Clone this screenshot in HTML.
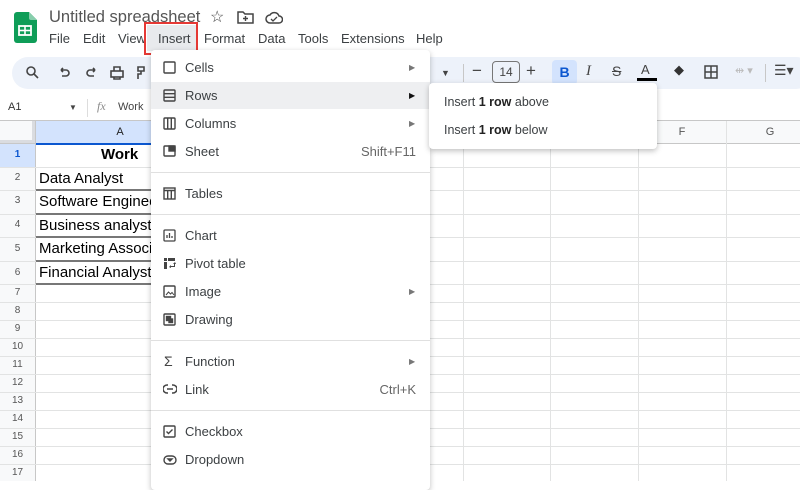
<!DOCTYPE html>
<html><head><meta charset="utf-8"><style>
*{margin:0;padding:0;box-sizing:border-box}
body{width:800px;height:481px;overflow:hidden;background:#fff;font-family:"Liberation Sans",Arial,sans-serif;position:relative;color:#444}
.a{position:absolute}
.t{font-size:13px;color:#3c4043}
.rn{position:absolute;left:0;width:35px;text-align:center;font-size:10px;color:#555}
.hl{position:absolute;left:0;width:800px;height:1px;background:#e2e3e3}
.vl{position:absolute;top:121px;width:1px;height:360px;background:#e2e3e3}
.cell{position:absolute;left:36px;font-size:15px;color:#000;font-family:"Liberation Sans",sans-serif}
.mi{position:absolute;left:185px;font-size:13px;color:#3c4043}
.ic{position:absolute;left:163px}
.ar{position:absolute;left:409px;font-size:8px;color:#777}
.sep{position:absolute;left:151px;width:279px;height:1px;background:#e0e0e0}
</style></head><body>
<svg class="a" style="left:14px;top:12px" width="23" height="31" viewBox="0 0 23 31"><path d="M3 0h12l8 8v20a3 3 0 0 1-3 3H3a3 3 0 0 1-3-3V3a3 3 0 0 1 3-3z" fill="#0f9d58"/><path d="M15 0l8 8h-6a2 2 0 0 1-2-2z" fill="#87ceac"/><rect x="5" y="14" width="12" height="9" fill="none" stroke="#fff" stroke-width="1.8"/><line x1="11" y1="14" x2="11" y2="23" stroke="#fff" stroke-width="1.6"/><line x1="5" y1="18.5" x2="17" y2="18.5" stroke="#fff" stroke-width="1.6"/></svg>
<div class="a" style="left:49px;top:8px;font-size:16.5px;color:#555">Untitled spreadsheet</div>
<div class="a" style="left:210px;top:7px;font-size:16px;color:#444">☆</div>
<svg class="a" style="left:237px;top:11px" width="17" height="13"><path d="M1 1h5l2 2h8v9H1z" fill="none" stroke="#444" stroke-width="1.5"/><path d="M8.5 5v5M6 7.5h5" stroke="#444" stroke-width="1.4"/></svg>
<svg class="a" style="left:265px;top:11px" width="18" height="13"><path d="M5 12a4 4 0 0 1 0-8 5 5 0 0 1 9 1 3.5 3.5 0 0 1 0 7z" fill="none" stroke="#444" stroke-width="1.5"/><path d="M6 8l2 2 4-4" fill="none" stroke="#444" stroke-width="1.3"/></svg>
<div class="a t" style="left:49px;top:31px">File</div>
<div class="a t" style="left:83px;top:31px">Edit</div>
<div class="a t" style="left:118px;top:31px">View</div>
<div class="a" style="left:147px;top:25px;width:49px;height:26px;background:#e8eaed"></div>
<div class="a" style="left:144px;top:22px;width:54px;height:33px;border:2px solid #e53935"></div>
<div class="a t" style="left:158px;top:31px">Insert</div>
<div class="a t" style="left:204px;top:31px">Format</div>
<div class="a t" style="left:258px;top:31px">Data</div>
<div class="a t" style="left:298px;top:31px">Tools</div>
<div class="a t" style="left:341px;top:31px">Extensions</div>
<div class="a t" style="left:416px;top:31px">Help</div>
<div class="a" style="left:12px;top:57px;width:800px;height:32px;background:#edf2fa;border-radius:16px"></div>
<svg class="a" style="left:25px;top:65px" width="120" height="16" fill="none" stroke="#444" stroke-width="1.6"><circle cx="6" cy="6" r="4"/><path d="M9 9l4 4"/><path d="M36 5h5a3 3 0 0 1 0 6h-4M36 5l2-2M36 5l2 2"/><path d="M70 5h-5a3 3 0 0 0 0 6h4M70 5l-2-2M70 5l-2 2"/><rect x="86" y="6" width="12" height="6"/><path d="M89 6V2h6v4M89 12v2h6v-2"/><path d="M113 2h6v4h-6zM116 6v3h-3v5"/></svg>
<div class="a" style="left:441px;top:68px;font-size:9px;color:#444">▼</div>
<div class="a" style="left:463px;top:64px;width:1px;height:18px;background:#c7c7c7"></div>
<div class="a" style="left:472px;top:61px;font-size:17px;color:#444">−</div>
<div class="a" style="left:492px;top:61px;width:28px;height:22px;border:1px solid #777;border-radius:4px;font-size:12px;text-align:center;line-height:20px;color:#444">14</div>
<div class="a" style="left:526px;top:61px;font-size:17px;color:#444">+</div>
<div class="a" style="left:552px;top:60px;width:25px;height:25px;background:#d3e3fd;border-radius:4px;text-align:center;font-weight:bold;font-size:14px;line-height:25px;color:#0b57d0">B</div>
<div class="a" style="left:586px;top:63px;font-size:15px;font-style:italic;font-family:'Liberation Serif',serif;color:#444">I</div>
<div class="a" style="left:612px;top:63px;font-size:14px;color:#444;text-decoration:line-through">S</div>
<div class="a" style="left:641px;top:62px;font-size:13px;color:#444">A</div>
<div class="a" style="left:637px;top:78px;width:20px;height:3px;background:#000"></div>
<div class="a" style="left:674px;top:62px;font-size:13px;color:#333">◆</div>
<svg class="a" style="left:704px;top:65px" width="14" height="14" fill="none" stroke="#444" stroke-width="1.5"><rect x="1" y="1" width="12" height="12"/><path d="M7 1v12M1 7h12"/></svg>
<div class="a" style="left:735px;top:64px;font-size:11px;color:#bbb">⇹ ▾</div>
<div class="a" style="left:765px;top:64px;width:1px;height:18px;background:#c7c7c7"></div>
<div class="a" style="left:774px;top:62px;font-size:14px;color:#444">☰▾</div>
<div class="a" style="left:8px;top:101px;font-size:11px;color:#333">A1</div>
<div class="a" style="left:69px;top:103px;font-size:8px;color:#444">▼</div>
<div class="a" style="left:87px;top:99px;width:1px;height:18px;background:#ddd"></div>
<div class="a" style="left:97px;top:99px;font-size:12px;font-style:italic;font-family:'Liberation Serif',serif;color:#888">fx</div>
<div class="a" style="left:118px;top:101px;font-size:11px;color:#444">Work</div>
<div class="hl" style="top:120px;background:#c7c7c7"></div>
<div class="a" style="left:0;top:121px;width:35px;height:22px;background:#f8f9fa;border-right:3px solid #dadce0;border-bottom:3px solid #dadce0"></div>
<div class="a" style="left:35px;top:121px;width:800px;height:22px;background:#f8f9fa"></div>
<div class="a" style="left:35px;top:121px;width:170px;height:22px;background:#d3e3fd;text-align:center;font-size:11px;line-height:22px;color:#222">A</div>
<div class="a" style="left:638px;top:121px;width:88px;height:22px;text-align:center;font-size:11px;line-height:22px;color:#555">F</div>
<div class="a" style="left:726px;top:121px;width:88px;height:22px;text-align:center;font-size:11px;line-height:22px;color:#555">G</div>
<div class="a" style="left:0;top:143px;width:35px;height:338px;background:#f8f9fa"></div>
<div class="a" style="left:0;top:143px;width:35px;height:24px;background:#d3e3fd"></div>
<div class="hl" style="top:143px;background:#c7c7c7"></div>
<div class="a" style="left:35px;top:143px;width:170px;height:2px;background:#0b57d0"></div>
<div class="vl" style="left:35px;background:#c7c7c7"></div>
<div class="vl" style="left:463px"></div><div class="vl" style="left:550px"></div><div class="vl" style="left:638px"></div><div class="vl" style="left:726px"></div>
<div class="hl" style="top:167px"></div><div class="hl" style="top:190px"></div><div class="hl" style="top:214px"></div><div class="hl" style="top:237px"></div><div class="hl" style="top:261px"></div><div class="hl" style="top:284px"></div>
<div class="hl" style="top:302px"></div><div class="hl" style="top:320px"></div><div class="hl" style="top:338px"></div><div class="hl" style="top:356px"></div><div class="hl" style="top:374px"></div><div class="hl" style="top:392px"></div><div class="hl" style="top:410px"></div><div class="hl" style="top:428px"></div><div class="hl" style="top:446px"></div><div class="hl" style="top:464px"></div>
<div class="rn" style="top:149px;font-weight:bold;color:#0b57d0">1</div>
<div class="rn" style="top:172px">2</div><div class="rn" style="top:195px">3</div><div class="rn" style="top:219px">4</div><div class="rn" style="top:243px">5</div><div class="rn" style="top:267px">6</div>
<div class="rn" style="top:287px">7</div><div class="rn" style="top:305px">8</div><div class="rn" style="top:323px">9</div><div class="rn" style="top:341px">10</div><div class="rn" style="top:359px">11</div><div class="rn" style="top:377px">12</div><div class="rn" style="top:395px">13</div><div class="rn" style="top:413px">14</div><div class="rn" style="top:431px">15</div><div class="rn" style="top:449px">16</div><div class="rn" style="top:467px">17</div>
<div class="cell" style="left:101px;top:146px;font-weight:bold">Work</div>
<div class="cell" style="top:170px;left:39px">Data Analyst</div>
<div class="cell" style="top:193px;left:39px">Software Engineer</div>
<div class="cell" style="top:217px;left:39px">Business analyst</div>
<div class="cell" style="top:240px;left:39px">Marketing Associate</div>
<div class="cell" style="top:264px;left:39px">Financial Analyst</div>
<div class="a" style="left:36px;top:189px;width:120px;height:2px;background:#777"></div>
<div class="a" style="left:36px;top:213px;width:120px;height:2px;background:#777"></div>
<div class="a" style="left:36px;top:236px;width:120px;height:2px;background:#777"></div>
<div class="a" style="left:36px;top:260px;width:120px;height:2px;background:#777"></div>
<div class="a" style="left:36px;top:283px;width:120px;height:2px;background:#777"></div>
<div class="a" style="left:151px;top:50px;width:279px;height:440px;background:#fff;box-shadow:0 2px 6px rgba(0,0,0,.25);border-radius:4px"></div>
<div class="a" style="left:151px;top:82px;width:279px;height:27px;background:#eeeff1"></div>
<svg class="ic" style="top:61px" width="13" height="13"><rect x="1" y="1" width="11" height="11" rx="1" fill="none" stroke="#444" stroke-width="1.4"/></svg>
<svg class="ic" style="top:89px" width="13" height="13" fill="none" stroke="#444" stroke-width="1.4"><rect x="1" y="1" width="11" height="11" rx="1"/><path d="M1 4.7h11M1 8.3h11"/></svg>
<svg class="ic" style="top:117px" width="13" height="13" fill="none" stroke="#444" stroke-width="1.4"><rect x="1" y="1" width="11" height="11" rx="1"/><path d="M4.7 1v11M8.3 1v11"/></svg>
<svg class="ic" style="top:145px" width="13" height="12" fill="none" stroke="#444" stroke-width="1.4"><rect x="1" y="1" width="11" height="10" rx="1"/><rect x="6" y="1" width="6" height="5" fill="#444"/></svg>
<svg class="ic" style="top:187px" width="13" height="13" fill="none" stroke="#444" stroke-width="1.4"><rect x="1" y="1" width="11" height="11"/><path d="M1 3.5h11M4.7 3.5v8.5M8.3 3.5v8.5"/></svg>
<svg class="ic" style="top:229px" width="13" height="13" fill="none" stroke="#444" stroke-width="1.3"><rect x="1" y="1" width="11" height="11" rx="1"/><path d="M4 9V6M6.5 9V4M9 9V7"/></svg>
<svg class="ic" style="top:257px" width="13" height="13" fill="#444"><rect x="1" y="1" width="3" height="3"/><rect x="5" y="1" width="7" height="3"/><rect x="1" y="5" width="3" height="7"/><path d="M6 10l2-2v1h3V7h-1l2-2 1 2h-1v3H8v1z"/></svg>
<svg class="ic" style="top:285px" width="13" height="13" fill="none" stroke="#444" stroke-width="1.4"><rect x="1" y="1" width="11" height="11" rx="1"/><path d="M3 10l2.5-3 2 2 1.5-1.5 2 2.5" stroke-width="1"/></svg>
<svg class="ic" style="top:313px" width="13" height="13" fill="none" stroke="#444" stroke-width="1.4"><rect x="1" y="1" width="11" height="11" rx="1"/><rect x="3.5" y="3.5" width="4" height="4" fill="#444"/><rect x="6" y="6" width="3.5" height="3.5" fill="#444"/></svg>
<div class="ic" style="top:353px;font-size:14px;color:#444;left:164px">Σ</div>
<svg class="ic" style="top:384px" width="14" height="10" fill="none" stroke="#444" stroke-width="1.5"><path d="M5 1H4a4 4 0 0 0 0 8h1M9 1h1a4 4 0 0 1 0 8H9M4 5h6"/></svg>
<svg class="ic" style="top:425px" width="13" height="13" fill="none" stroke="#444" stroke-width="1.4"><rect x="1" y="1" width="11" height="11" rx="1"/><path d="M3.5 6.5l2 2 4-4"/></svg>
<svg class="ic" style="top:455px" width="14" height="10" fill="none" stroke="#444" stroke-width="1.4"><rect x="1" y="1" width="12" height="8" rx="4"/><path d="M5 4h4l-2 2z" fill="#444"/></svg>
<div class="mi" style="top:60px">Cells</div>
<div class="mi" style="top:88px">Rows</div>
<div class="mi" style="top:116px">Columns</div>
<div class="mi" style="top:144px">Sheet</div>
<div class="mi" style="top:186px">Tables</div>
<div class="mi" style="top:228px">Chart</div>
<div class="mi" style="top:256px">Pivot table</div>
<div class="mi" style="top:284px">Image</div>
<div class="mi" style="top:312px">Drawing</div>
<div class="mi" style="top:354px">Function</div>
<div class="mi" style="top:382px">Link</div>
<div class="mi" style="top:424px">Checkbox</div>
<div class="mi" style="top:452px">Dropdown</div>
<div class="ar" style="top:63px">▶</div>
<div class="ar" style="top:91px;color:#111">▶</div>
<div class="ar" style="top:119px">▶</div>
<div class="ar" style="top:287px">▶</div>
<div class="ar" style="top:357px">▶</div>
<div class="a" style="left:340px;top:144px;width:76px;text-align:right;font-size:13px;color:#666">Shift+F11</div>
<div class="a" style="left:340px;top:382px;width:76px;text-align:right;font-size:13px;color:#666">Ctrl+K</div>
<div class="sep" style="top:172px"></div>
<div class="sep" style="top:214px"></div>
<div class="sep" style="top:340px"></div>
<div class="sep" style="top:410px"></div>
<div class="a" style="left:429px;top:83px;width:228px;height:66px;background:#fff;box-shadow:0 2px 6px rgba(0,0,0,.25);border-radius:4px"></div>
<div class="a" style="left:444px;top:95px;font-size:12.5px;color:#3c4043">Insert <b style="color:#222">1 row</b> above</div>
<div class="a" style="left:444px;top:123px;font-size:12.5px;color:#3c4043">Insert <b style="color:#222">1 row</b> below</div>
</body></html>
